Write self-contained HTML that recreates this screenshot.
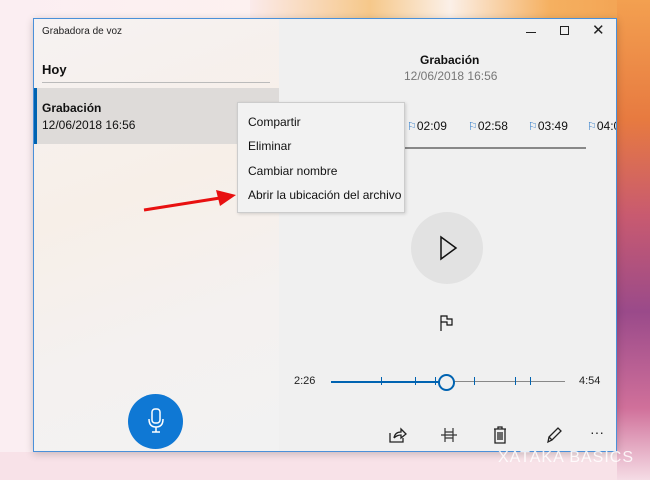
<!DOCTYPE html>
<html><head><meta charset="utf-8"><style>
*{margin:0;padding:0;box-sizing:border-box}
body{width:650px;height:480px;overflow:hidden;position:relative;font-family:"Liberation Sans",sans-serif;
background:linear-gradient(90deg,#fbeef2 0%,#fdf1f0 40%,#f8e8e6 100%);}
.bg1{position:absolute;left:250px;top:0;width:400px;height:30px;background:linear-gradient(90deg,#fbeaea 0%,#f6c88a 30%,#fbf0e8 50%,#f5b060 75%,#f2a050 100%)}
.bg2{position:absolute;left:617px;top:0;width:33px;height:480px;background:linear-gradient(180deg,#f3a050 0%,#e77a40 25%,#c85a70 45%,#9a4a8a 65%,#d0709a 85%,#f5dce5 100%)}
.bg3{position:absolute;left:0;top:452px;width:617px;height:28px;background:#f8e2e8}
.win{position:absolute;left:33px;top:18px;width:584px;height:434px;border:1px solid #4a90d9;background:#f0f0f0;box-shadow:0 2px 8px rgba(0,0,0,.2);overflow:hidden}
.left{position:absolute;left:0;top:0;width:245px;height:432px;background:linear-gradient(160deg,#f6f2f2 0%,#f7efe8 40%,#f4f1f0 70%,#f2f2f2 100%)}
.t{position:absolute;font-size:10px;color:#222;white-space:nowrap}
.sel{position:absolute;left:0;top:69px;width:245px;height:56px;background:#dedbd9;border-left:3px solid #0063b1}
.menu{position:absolute;left:237px;top:102px;width:168px;height:111px;background:#f2f2f2;border:1px solid #ccc;box-shadow:1px 1px 3px rgba(0,0,0,.15)}
.menu div{position:absolute;left:10px;font-size:12px;color:#111;white-space:nowrap}
.flag{color:#2a78c8;font-size:11px}
.fl{position:absolute;top:100px;font-size:12px;color:#111;white-space:nowrap}
</style></head><body>
<div class="bg1"></div><div class="bg2"></div><div class="bg3"></div>
<div class="win">
 <div class="left"></div>
 <div class="t" style="left:8px;top:7px;font-size:10px">Grabadora de voz</div>
 <div style="position:absolute;left:492px;top:13px;width:10px;height:1px;background:#222"></div>
 <div style="position:absolute;left:526px;top:7px;width:9px;height:9px;border:1px solid #222"></div>
 <div style="position:absolute;left:558px;top:2px;font-size:15px;color:#222">✕</div>
 <div class="t" style="left:8px;top:43px;font-size:13px;font-weight:bold;color:#111">Hoy</div>
 <div style="position:absolute;left:8px;top:63px;width:228px;height:1px;background:#bbb"></div>
 <div class="sel"></div>
 <div class="t" style="left:8px;top:82px;font-size:12px;font-weight:bold;color:#111">Grabación</div>
 <div class="t" style="left:8px;top:99px;font-size:12px;color:#111">12/06/2018 16:56</div>
 <div class="t" style="left:386px;top:34px;font-size:12px;font-weight:bold;color:#111">Grabación</div>
 <div class="t" style="left:370px;top:50px;font-size:12px;color:#777">12/06/2018 16:56</div>
 <div class="fl" style="left:373px"><span class="flag">⚐</span>02:09</div>
 <div class="fl" style="left:434px"><span class="flag">⚐</span>02:58</div>
 <div class="fl" style="left:494px"><span class="flag">⚐</span>03:49</div>
 <div class="fl" style="left:553px"><span class="flag">⚐</span>04:00</div>
 <div style="position:absolute;left:370px;top:128px;width:182px;height:2px;background:#888"></div>
 <div style="position:absolute;left:377px;top:193px;width:72px;height:72px;border-radius:50%;background:#e2e2e2"></div>
 <svg style="position:absolute;left:405px;top:216px" width="20" height="26"><path d="M2 2 L17 13 L2 24 Z" fill="none" stroke="#111" stroke-width="1.5"/></svg>
 <svg style="position:absolute;left:405px;top:295px" width="16" height="18"><path d="M2 17 V2 H8 V5 H13 V11 H8 V8 H2" fill="none" stroke="#111" stroke-width="1.2"/></svg>
 <div class="t" style="left:260px;top:356px;font-size:11px">2:26</div>
 <div class="t" style="left:545px;top:356px;font-size:11px">4:54</div>
 <div style="position:absolute;left:297px;top:362px;width:116px;height:2px;background:#0063b1"></div>
 <div style="position:absolute;left:413px;top:362px;width:118px;height:1px;background:#888"></div>
 <div style="position:absolute;left:347px;top:358px;width:1px;height:8px;background:#0063b1"></div>
 <div style="position:absolute;left:381px;top:358px;width:1px;height:8px;background:#0063b1"></div>
 <div style="position:absolute;left:401px;top:358px;width:1px;height:8px;background:#0063b1"></div>
 <div style="position:absolute;left:440px;top:358px;width:1px;height:8px;background:#0063b1"></div>
 <div style="position:absolute;left:481px;top:358px;width:1px;height:8px;background:#0063b1"></div>
 <div style="position:absolute;left:496px;top:358px;width:1px;height:8px;background:#0063b1"></div>
 <div style="position:absolute;left:404px;top:355px;width:17px;height:17px;border-radius:50%;border:2px solid #0063b1;background:#f0f0f0"></div>
 <div style="position:absolute;left:94px;top:375px;width:55px;height:55px;border-radius:50%;background:#0f78d4"></div>
 <svg style="position:absolute;left:110px;top:388px" width="24" height="30"><rect x="8" y="2" width="8" height="14" rx="3" fill="none" stroke="#fff" stroke-width="1.5"/><path d="M5 12 Q5 20 12 20 Q19 20 19 12 M12 20 V25 M8 25 H16" fill="none" stroke="#fff" stroke-width="1.5"/></svg>
 <svg style="position:absolute;left:354px;top:407px" width="20" height="18"><path d="M2 7 V16 H15 V12 M6 12 Q7 6 13 6 V3 L18 8 L13 12 V9 Q9 9 6 12" fill="none" stroke="#222" stroke-width="1.3"/></svg>
 <svg style="position:absolute;left:405px;top:407px" width="20" height="18"><path d="M2 9 H18 M6 2 V16 M14 2 V16 M6 6 H14 M6 12 H14" fill="none" stroke="#333" stroke-width="1.2"/></svg>
 <svg style="position:absolute;left:458px;top:406px" width="16" height="20"><path d="M2 4 H14 M6 4 V2 H10 V4 M3 4 V18 H13 V4 M6 7 V15 M8 7 V15 M10 7 V15" fill="none" stroke="#222" stroke-width="1.3"/></svg>
 <svg style="position:absolute;left:511px;top:406px" width="18" height="20"><path d="M3 17 L4 12 L13 3 L16 6 L7 15 Z M4 12 L7 15" fill="none" stroke="#222" stroke-width="1.3"/></svg>
 <div class="t" style="left:556px;top:405px;font-size:14px">···</div>
</div>
<div class="menu">
 <div style="top:12px">Compartir</div>
 <div style="top:36px">Eliminar</div>
 <div style="top:61px">Cambiar nombre</div>
 <div style="top:85px">Abrir la ubicación del archivo</div>
</div>
<svg style="position:absolute;left:140px;top:186px" width="100" height="30"><path d="M4 24 L80 12" stroke="#e81010" stroke-width="3"/><path d="M76 4 L96 9 L80 20 Z" fill="#e81010"/></svg>
<div style="position:absolute;left:498px;top:449px;font-size:16px;color:rgba(255,255,255,.85);letter-spacing:1px">XATAKA BASICS</div>
</body></html>
